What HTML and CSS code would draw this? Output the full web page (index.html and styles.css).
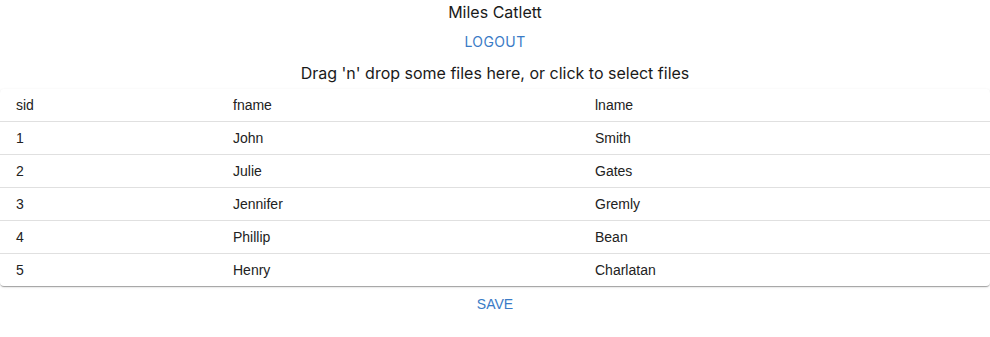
FILE: index.html
```html
<!DOCTYPE html>
<html>
<head>
<meta charset="utf-8">
<link rel="stylesheet" href="styles.css">
</head>
<body>
<div class="app">
  <div class="user">Miles Catlett</div>
  <button class="btn btn-logout">LOGOUT</button>
  <div class="dropzone">Drag 'n' drop some files here, or click to select files</div>
  <div class="paper">
    <table class="table">
      <colgroup>
        <col class="c1"><col class="c2"><col class="c3">
      </colgroup>
      <thead>
        <tr><th>sid</th><th>fname</th><th>lname</th></tr>
      </thead>
      <tbody>
        <tr><td>1</td><td>John</td><td>Smith</td></tr>
        <tr><td>2</td><td>Julie</td><td>Gates</td></tr>
        <tr><td>3</td><td>Jennifer</td><td>Gremly</td></tr>
        <tr><td>4</td><td>Phillip</td><td>Bean</td></tr>
        <tr><td>5</td><td>Henry</td><td>Charlatan</td></tr>
      </tbody>
    </table>
  </div>
  <button class="btn btn-save">SAVE</button>
</div>
</body>
</html>
```

FILE: styles.css
```css
html, body {
  margin: 0;
  padding: 0;
  background: #fff;
}
.app {
  display: flex;
  flex-direction: column;
  align-items: center;
  font-family: Inter, "Noto Sans", sans-serif;
  color: #1a1a1a;
}
.user {
  font-size: 16px;
  line-height: 24px;
  height: 24px;
}
.btn {
  background: none;
  border: 0;
  padding: 6px 8px;
  line-height: 24px;
  font-size: 14px;
  color: #3a7bc6;
  letter-spacing: 0.4px;
  cursor: pointer;
}
.btn-logout {
  font-family: Inter, "Noto Sans", sans-serif;
  height: 36px;
}
.dropzone {
  font-size: 16px;
  line-height: 24px;
  height: 26px;
  padding-top: 1px;
}
.paper {
  align-self: stretch;
  background: #fff;
  border-radius: 4px;
  box-shadow: 0 2px 1px -1px rgba(0,0,0,0.2), 0 1px 1px 0 rgba(0,0,0,0.14), 0 1px 3px 0 rgba(0,0,0,0.12);
  margin-top: 2px;
}
.table {
  width: 100%;
  border-collapse: collapse;
  table-layout: fixed;
  font-family: "Liberation Sans", Arial, sans-serif;
  font-size: 14px;
  color: #222;
}
.c1 { width: 217px; }
.c2 { width: 362px; }
.table th, .table td {
  text-align: left;
  font-weight: 400;
  padding: 6px 24px 6px 16px;
  line-height: 20px;
  border-bottom: 1px solid #e0e0e0;
}
.table tbody tr:last-child td {
  border-bottom: 0;
}
.btn-save {
  font-family: "Liberation Sans", Arial, sans-serif;
  letter-spacing: 0;
}
```
